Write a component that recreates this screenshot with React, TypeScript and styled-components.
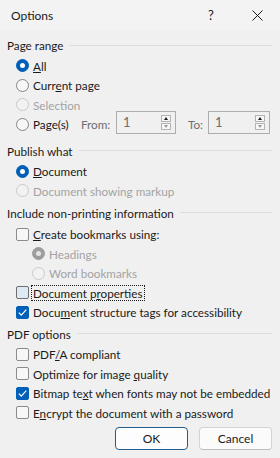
import * as React from "react";
import styled, { createGlobalStyle } from "styled-components";

const GlobalStyle = createGlobalStyle`
  html, body {
    margin: 0;
    padding: 0;
    background: #f0f0f0;
  }
  body {
    font-family: Lato, "Noto Sans", "Segoe UI", sans-serif;
    font-size: 11.7px;
    color: #1a1a1a;
  }
`;

const Dialog = styled.div`
  width: 280px;
  height: 458px;
  display: flex;
  flex-direction: column;
  background: #f0f0f0;
  overflow: hidden;
`;

const TitleBar = styled.div`
  height: 30px;
  flex: none;
  display: flex;
  align-items: center;
  background: #f3f3f3;
  padding-left: 11px;
`;

const Title = styled.div`
  flex: 1;
  font-size: 12px;
`;

const TitleButton = styled.div`
  width: 46px;
  height: 30px;
  display: flex;
  align-items: center;
  justify-content: center;
  font-size: 13px;
  color: #1a1a1a;
`;

const Body = styled.div`
  display: flex;
  flex-direction: column;
  gap: 1.25px;
  padding: 4.25px 8px 0 7px;
`;

const Section = styled.section`
  display: flex;
  flex-direction: column;
`;

const Heading = styled.div`
  height: 21.5px;
  display: flex;
  align-items: center;
  gap: 6px;
  white-space: nowrap;

  &::after {
    content: "";
    flex: 1;
    height: 1px;
    background: #dcdcdc;
  }
`;

const Row = styled.div<{ $indent?: boolean; $spaced?: boolean; $lead?: boolean }>`
  height: 19.5px;
  display: flex;
  align-items: center;
  gap: 4px;
  padding-left: ${(p) => (p.$indent ? 25 : 9)}px;
  margin-top: ${(p) => (p.$lead ? 1 : 0)}px;
  margin-bottom: ${(p) => (p.$spaced ? 5 : 0)}px;
  white-space: nowrap;
`;

const Label = styled.span<{ $disabled?: boolean; $focus?: boolean }>`
  color: ${(p) => (p.$disabled ? "#a3a3a3" : "#1a1a1a")};
  line-height: 14px;
  ${(p) =>
    p.$focus &&
    `
    border: 1px dotted #1a1a1a;
    padding: 0 1px;
    margin-left: -2px;
  `}
`;

const Key = styled.span`
  text-decoration: underline;
  text-underline-offset: 1px;
`;

const Radio = styled.span<{ $checked?: boolean; $disabled?: boolean }>`
  width: 13px;
  height: 13px;
  flex: none;
  box-sizing: border-box;
  border-radius: 50%;
  position: relative;
  border: 1px solid
    ${(p) =>
      p.$checked
        ? p.$disabled
          ? "#9d9d9d"
          : "#005fb8"
        : p.$disabled
        ? "#c9c9c9"
        : "#858585"};
  background: ${(p) =>
    p.$checked
      ? p.$disabled
        ? "#9d9d9d"
        : "#005fb8"
      : p.$disabled
      ? "#f2f2f2"
      : "#f7f7f7"};

  &::after {
    content: "";
    display: ${(p) => (p.$checked ? "block" : "none")};
    position: absolute;
    left: 50%;
    top: 50%;
    width: 5px;
    height: 5px;
    margin: -2.5px 0 0 -2.5px;
    border-radius: 50%;
    background: ${(p) => (p.$disabled ? "#e4e4e4" : "#ffffff")};
  }
`;

const Box = styled.span<{ $checked?: boolean; $hover?: boolean }>`
  width: 13px;
  height: 13px;
  flex: none;
  box-sizing: border-box;
  border-radius: 2px;
  display: flex;
  align-items: center;
  justify-content: center;
  border: 1px solid
    ${(p) => (p.$checked ? "#005fb8" : p.$hover ? "#6f6f6f" : "#8b8b8b")};
  background: ${(p) =>
    p.$checked ? "#005fb8" : p.$hover ? "#dde9f5" : "#f7f7f7"};
`;

const Check = () => (
  <svg width="11" height="11" viewBox="0 0 11 11">
    <path
      d="M1.8 5.6 L4.3 8.1 L9.3 2.6"
      fill="none"
      stroke="#ffffff"
      strokeWidth="1.3"
    />
  </svg>
);

const Checkbox = ({ checked, hover }: { checked?: boolean; hover?: boolean }) => (
  <Box $checked={checked} $hover={hover}>
    {checked && <Check />}
  </Box>
);

const PagesLabel = styled(Label)`
  width: 44px;
  flex: none;
`;

const FieldLabel = styled.span<{ $width: number; $gap?: number }>`
  width: ${(p) => p.$width}px;
  flex: none;
  margin-left: ${(p) => p.$gap || 0}px;
  color: #6d6d6d;
`;

const SpinBox = styled.div<{ $width: number }>`
  width: ${(p) => p.$width}px;
  height: 23px;
  flex: none;
  margin-top: -4px;
  box-sizing: border-box;
  border: 1px solid #adadad;
  background: #f0f0f0;
  display: flex;
  align-items: center;
  padding: 0 4px 0 6px;
  color: #6d6d6d;
  font-size: 13px;
`;

const SpinValue = styled.span`
  flex: 1;
`;

const SpinButtons = styled.div`
  display: flex;
  flex-direction: column;
  gap: 1px;
`;

const SpinButton = styled.div<{ $down?: boolean }>`
  width: 10px;
  height: 7px;
  box-sizing: border-box;
  border: 1px solid #b4b4b4;
  background: #f7f7f7;
  display: flex;
  align-items: center;
  justify-content: center;

  &::after {
    content: "";
    border-left: 2.5px solid transparent;
    border-right: 2.5px solid transparent;
    ${(p) =>
      p.$down
        ? "border-top: 3px solid #9a9a9a;"
        : "border-bottom: 3px solid #1a1a1a;"}
  }
`;

const Spinner = ({ width }: { width: number }) => (
  <SpinBox $width={width}>
    <SpinValue>1</SpinValue>
    <SpinButtons>
      <SpinButton />
      <SpinButton $down />
    </SpinButtons>
  </SpinBox>
);

const Footer = styled.div`
  display: flex;
  justify-content: flex-end;
  gap: 11px;
  padding: 4px 8px 0 0;
`;

const Button = styled.button<{ $primary?: boolean }>`
  width: 73px;
  height: 23px;
  box-sizing: border-box;
  border-radius: 4px;
  border: 1px solid ${(p) => (p.$primary ? "#1f5d8e" : "#d3d3d3")};
  border-bottom-color: ${(p) => (p.$primary ? "#1f5d8e" : "#bdbdbd")};
  background: ${(p) => (p.$primary ? "#fdfdfd" : "#fbfbfb")};
  font-family: inherit;
  font-size: 12px;
  color: #1a1a1a;
  padding: 0;
`;

const CloseIcon = () => (
  <svg width="11" height="11" viewBox="0 0 11 11">
    <path d="M0.5 0.5 L10.5 10.5 M10.5 0.5 L0.5 10.5" stroke="#1a1a1a" strokeWidth="1" />
  </svg>
);

export default function App() {
  return (
    <>
      <GlobalStyle />
      <Dialog>
        <TitleBar>
          <Title>Options</Title>
          <TitleButton>?</TitleButton>
          <TitleButton>
            <CloseIcon />
          </TitleButton>
        </TitleBar>
        <Body>
          <Section>
            <Heading>Page range</Heading>
            <Row>
              <Radio $checked />
              <Label>
                <Key>A</Key>ll
              </Label>
            </Row>
            <Row>
              <Radio />
              <Label>
                Curr<Key>e</Key>nt page
              </Label>
            </Row>
            <Row>
              <Radio $disabled />
              <Label $disabled>Selection</Label>
            </Row>
            <Row $spaced>
              <Radio />
              <PagesLabel>
                Pa<Key>g</Key>e(s)
              </PagesLabel>
              <FieldLabel $width={31}>From:</FieldLabel>
              <Spinner width={60} />
              <FieldLabel $width={16} $gap={8}>
                To:
              </FieldLabel>
              <Spinner width={62} />
            </Row>
          </Section>
          <Section>
            <Heading>Publish what</Heading>
            <Row>
              <Radio $checked />
              <Label>
                <Key>D</Key>ocument
              </Label>
            </Row>
            <Row>
              <Radio $disabled />
              <Label $disabled>Document showing markup</Label>
            </Row>
          </Section>
          <Section>
            <Heading>Include non-printing information</Heading>
            <Row $lead>
              <Checkbox />
              <Label>
                <Key>C</Key>reate bookmarks using:
              </Label>
            </Row>
            <Row $indent>
              <Radio $checked $disabled />
              <Label $disabled>Headings</Label>
            </Row>
            <Row $indent>
              <Radio $disabled />
              <Label $disabled>Word bookmarks</Label>
            </Row>
            <Row>
              <Checkbox hover />
              <Label $focus>
                Document p<Key>r</Key>operties
              </Label>
            </Row>
            <Row>
              <Checkbox checked />
              <Label>
                Docu<Key>m</Key>ent structure tags for accessibility
              </Label>
            </Row>
          </Section>
          <Section>
            <Heading>PDF options</Heading>
            <Row>
              <Checkbox />
              <Label>
                PDF<Key>/</Key>A compliant
              </Label>
            </Row>
            <Row>
              <Checkbox />
              <Label>
                Optimize for image <Key>q</Key>uality
              </Label>
            </Row>
            <Row>
              <Checkbox checked />
              <Label>
                Bitmap te<Key>x</Key>t when fonts may not be embedded
              </Label>
            </Row>
            <Row>
              <Checkbox />
              <Label>
                E<Key>n</Key>crypt the document with a password
              </Label>
            </Row>
          </Section>
        </Body>
        <Footer>
          <Button $primary>OK</Button>
          <Button>Cancel</Button>
        </Footer>
      </Dialog>
    </>
  );
}
